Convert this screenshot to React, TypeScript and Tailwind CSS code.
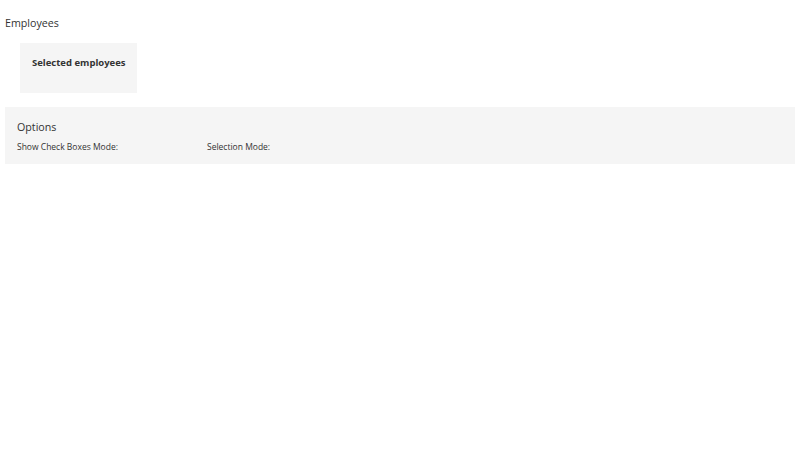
import React from "react";

const App: React.FC = () => {
  return (
    <div
      className="w-[800px] h-[450px] bg-white text-[#333]"
      style={{ fontFamily: '"Open Sans", "Noto Sans", sans-serif' }}
    >
      <div className="px-[5px] pt-[16px]">
        <h2 className="text-[10.7px] leading-[15px]">Employees</h2>
        <div className="pl-[15px] pt-[12px]">
          <div className="w-[117px] h-[50px] bg-[#f5f5f5] pt-[13px] pl-[12px]">
            <p className="text-[9.5px] font-bold leading-[13px]">Selected employees</p>
          </div>
        </div>
        <div className="mt-[14px] h-[57px] bg-[#f5f5f5] px-[12px] pt-[13px]">
          <div className="text-[10.7px] leading-[15px]">Options</div>
          <div className="flex mt-[6px] text-[8.5px] leading-[12px]">
            <div className="w-[190px]">Show Check Boxes Mode:</div>
            <div>Selection Mode:</div>
          </div>
        </div>
      </div>
    </div>
  );
};

export default App;
